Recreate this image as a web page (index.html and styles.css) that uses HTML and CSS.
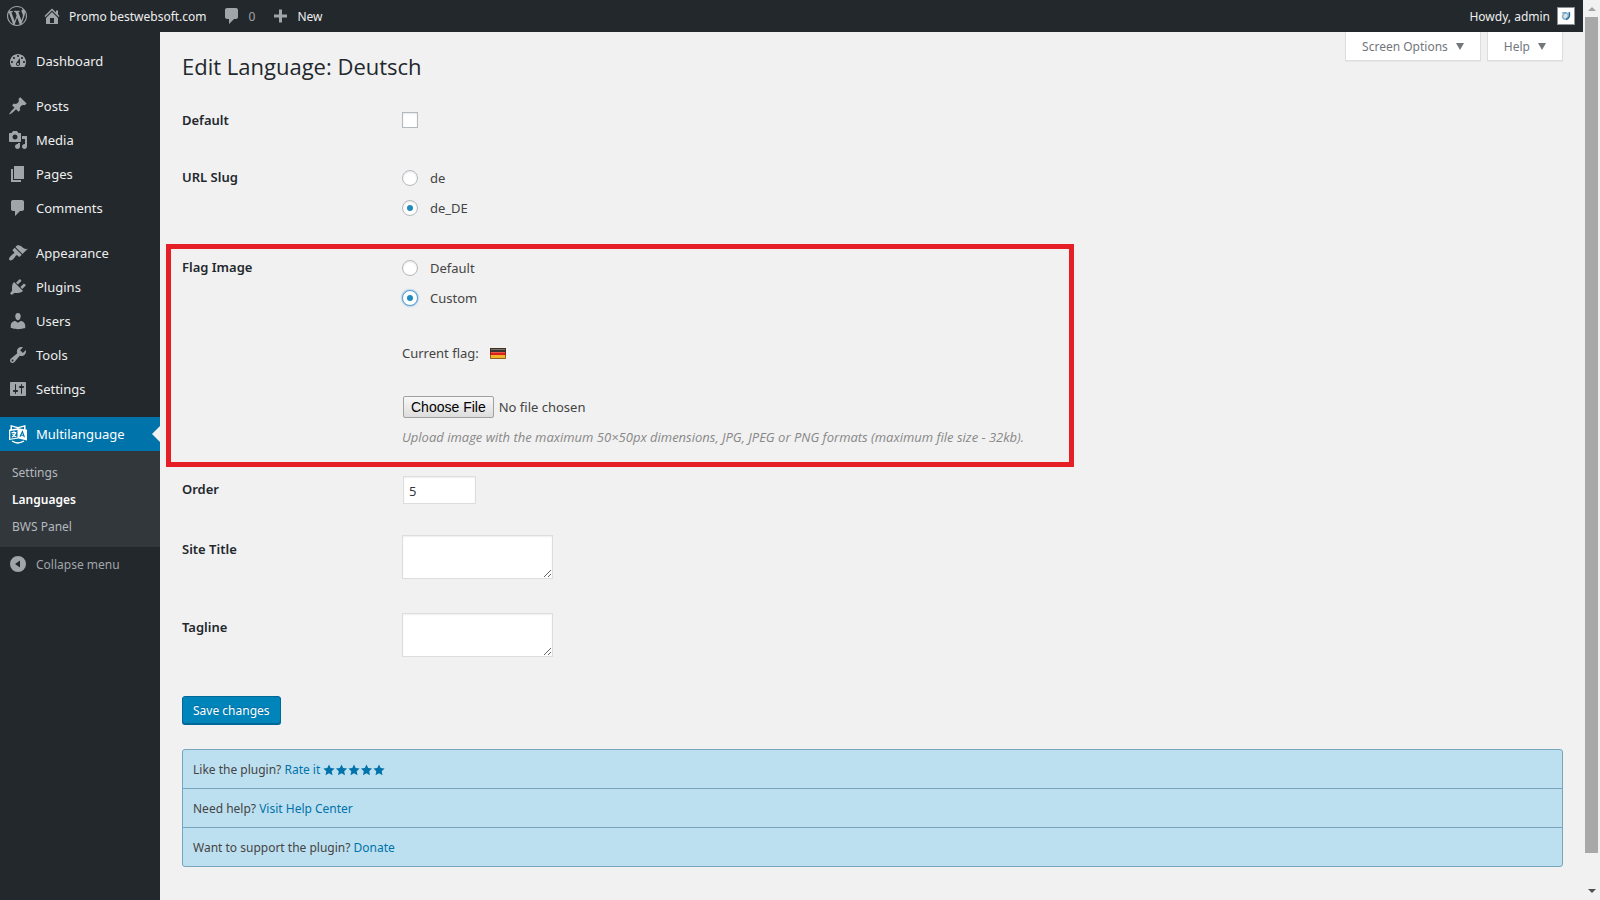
FILE: index.html
```
<!DOCTYPE html>
<html lang="en">
<head>
    <meta charset="UTF-8">
    <meta name="viewport" content="width=device-width, initial-scale=1.0">
    <title>Edit Language: Deutsch</title>
    <link rel="stylesheet" href="styles.css">
</head>
<body>
    <div class="page">
        <header class="adminbar">
            <a href="#" class="bar-item" aria-label="About WordPress">
                <svg class="icon" viewBox="0 0 20 20"><path d="M20 10c0-5.51-4.49-10-10-10C4.48 0 0 4.49 0 10c0 5.52 4.48 10 10 10 5.51 0 10-4.48 10-10zM7.78 15.37L4.37 6.22c.55-.02 1.17-.08 1.17-.08.5-.06.44-1.13-.06-1.11 0 0-1.45.11-2.37.11-.18 0-.37 0-.58-.01C4.12 2.69 6.87 1.11 10 1.11c2.33 0 4.45.87 6.05 2.34-.68-.11-1.65.39-1.65 1.58 0 .74.45 1.36.9 2.1.35.61.55 1.36.55 2.46 0 1.49-1.4 5-1.4 5l-3.03-8.37c.54-.02.82-.17.82-.17.5-.05.44-1.25-.06-1.22 0 0-1.44.12-2.38.12-.87 0-2.33-.12-2.33-.12-.5-.03-.56 1.2-.06 1.22l.92.08 1.26 3.41zM17.41 10c.24-.64.74-1.87.43-4.25.7 1.29 1.05 2.71 1.05 4.25 0 3.29-1.73 6.24-4.4 7.78.97-2.59 1.94-5.2 2.92-7.78zM6.1 18.09C3.12 16.65 1.11 13.53 1.11 10c0-1.3.23-2.48.72-3.59C3.25 10.3 4.67 14.2 6.1 18.09zm4.03-6.63l2.58 6.98c-.86.29-1.76.45-2.71.45-.79 0-1.57-.11-2.29-.33.81-2.38 1.62-4.74 2.42-7.1z"/></svg>
            </a>
            <a href="#" class="bar-item">
                <svg class="icon" viewBox="0 0 20 20"><path d="M16 8.5l1.53 1.53-1.06 1.06L10 4.6l-6.47 6.49-1.06-1.06L10 2.5l4 4v-2h2v4zm-6-2.46l6 5.99V18H4v-5.97zM12 17v-5H8v5h4z"/></svg>
                <span>Promo bestwebsoft.com</span>
            </a>
            <a href="#" class="bar-item bar-comments">
                <svg class="icon" viewBox="0 0 20 20"><path d="M5 2h9c1.1 0 2 .9 2 2v7c0 1.1-.9 2-2 2h-2l-5 5v-5H5c-1.1 0-2-.9-2-2V4c0-1.1.9-2 2-2z"/></svg>
                <span>0</span>
            </a>
            <a href="#" class="bar-item">
                <svg class="icon" viewBox="0 0 20 20"><path d="M17 8.5v3h-5v5H9v-5H4v-3h5v-5h3v5z"/></svg>
                <span>New</span>
            </a>
            <a href="#" class="bar-item bar-account">
                <span>Howdy, admin</span>
                <svg class="avatar" viewBox="0 0 18 18"><rect width="18" height="18" fill="#8c8f94"/><rect x="1" y="1" width="16" height="16" fill="#fff"/><ellipse cx="8.5" cy="9" rx="2.6" ry="3.2" fill="#d5e5ee" stroke="#8db4cc" stroke-width="1.6" transform="rotate(30 8.5 9)"/><path d="M12 5c1.5 3 .5 6.5-3 7.5" fill="none" stroke="#2f6d96" stroke-width="1.4"/><path d="M5 6l4-.5" stroke="#5d93b5"/></svg>
            </a>
        </header>

        <div class="layout">
            <nav class="menu">
                <a href="#" class="menu-item"><svg class="icon" viewBox="0 0 20 20"><path d="M3.76 16h12.48c1.1-1.37 1.76-3.11 1.76-5 0-4.42-3.58-8-8-8s-8 3.58-8 8c0 1.89.66 3.63 1.76 5zM10 4c.55 0 1 .45 1 1s-.45 1-1 1-1-.45-1-1 .45-1 1-1zM6 6c.55 0 1 .45 1 1s-.45 1-1 1-1-.45-1-1 .45-1 1-1zm8 0c.55 0 1 .45 1 1s-.45 1-1 1-1-.45-1-1 .45-1 1-1zm-5.37 5.55L12 7v6c0 1.1-.9 2-2 2s-2-.9-2-2c0-.57.24-1.08.63-1.45zM4 10c.55 0 1 .45 1 1s-.45 1-1 1-1-.45-1-1 .45-1 1-1zm12 0c.55 0 1 .45 1 1s-.45 1-1 1-1-.45-1-1 .45-1 1-1zm-5 3c0-.55-.45-1-1-1s-1 .45-1 1 .45 1 1 1 1-.45 1-1z"/></svg>Dashboard</a>
                <div class="separator"></div>
                <a href="#" class="menu-item"><svg class="icon" viewBox="0 0 20 20"><path d="M10.44 3.02l1.82-1.82 6.36 6.35-1.83 1.82c-1.05-.68-2.48-.57-3.41.36l-.75.75c-.92.93-1.04 2.35-.35 3.41l-1.83 1.82-2.41-2.41-2.8 2.79c-.42.42-3.38 2.71-3.8 2.29s1.86-3.39 2.28-3.81l2.79-2.79L4.1 9.36l1.83-1.82c1.05.69 2.48.57 3.4-.36l.75-.75c.93-.92 1.05-2.35.36-3.41z"/></svg>Posts</a>
                <a href="#" class="menu-item"><svg class="icon" viewBox="0 0 20 20"><path d="M13 11V4c0-.55-.45-1-1-1h-1.67L9 1H5L3.67 3H2c-.55 0-1 .45-1 1v7c0 .55.45 1 1 1h10c.55 0 1-.45 1-1zM7 4.5c1.38 0 2.5 1.12 2.5 2.5S8.38 9.5 7 9.5 4.5 8.38 4.5 7 5.62 4.5 7 4.5zM14 6h5v10.5c0 1.38-1.12 2.5-2.5 2.5S14 17.88 14 16.5s1.12-2.5 2.5-2.5c.17 0 .34.02.5.05V9h-3V6zm-4 8.05V13h2v3.5c0 1.38-1.12 2.5-2.5 2.5S7 17.88 7 16.5 8.12 14 9.5 14c.17 0 .34.02.5.05z"/></svg>Media</a>
                <a href="#" class="menu-item"><svg class="icon" viewBox="0 0 20 20"><path d="M6 15V2h10v13H6zm-1 1h8v2H3V5h2v11z"/></svg>Pages</a>
                <a href="#" class="menu-item"><svg class="icon" viewBox="0 0 20 20"><path d="M5 2h9c1.1 0 2 .9 2 2v7c0 1.1-.9 2-2 2h-2l-5 5v-5H5c-1.1 0-2-.9-2-2V4c0-1.1.9-2 2-2z"/></svg>Comments</a>
                <div class="separator"></div>
                <a href="#" class="menu-item"><svg class="icon" viewBox="0 0 20 20"><path d="M14.48 11.06L7.41 3.99l1.5-1.5c.5-.56 2.3-.47 3.51.32 1.21.8 1.43 1.28 2.91 2.1 1.18.64 2.45 1.26 4.45.85zm-.71.71L6.7 4.7 4.93 6.47c-.39.39-.39 1.02 0 1.41l1.06 1.06c.39.39.39 1.03 0 1.42-.6.6-1.43 1.11-2.21 1.69-.35.26-.7.53-1.01.84C1.43 14.23.4 16.08 1.4 17.07c.99 1 2.84-.03 4.18-1.36.31-.31.58-.66.85-1.02.57-.78 1.08-1.61 1.69-2.21.39-.39 1.02-.39 1.41 0l1.06 1.06c.39.39 1.02.39 1.41 0z"/></svg>Appearance</a>
                <a href="#" class="menu-item"><svg class="icon" viewBox="0 0 20 20"><path d="M13.11 4.36L9.87 7.6 8 5.73l3.24-3.24c.35-.34 1.05-.2 1.56.32.52.51.66 1.21.31 1.55zm-8 1.77l.91-1.12 9.01 9.01-1.19.84c-.71.71-2.63 1.16-3.82 1.16H6.14L4.9 17.26c-.59.59-1.54.59-2.12 0-.59-.58-.59-1.53 0-2.12l1.24-1.24v-3.88c0-1.13.4-3.19 1.09-3.89zm7.26 3.97l3.24-3.24c.34-.35 1.04-.21 1.55.31.52.51.66 1.21.31 1.55l-3.24 3.25z"/></svg>Plugins</a>
                <a href="#" class="menu-item"><svg class="icon" viewBox="0 0 20 20"><path d="M10 9.25c-2.27 0-2.73-3.44-2.73-3.44C7 4.02 7.82 2 9.97 2c2.16 0 2.98 2.02 2.71 3.81 0 0-.41 3.44-2.68 3.44zm0 2.57L12.72 10c2.39 0 4.52 2.33 4.52 4.53v2.49s-3.65 1.13-7.24 1.13c-3.65 0-7.24-1.13-7.24-1.13v-2.49c0-2.25 1.94-4.48 4.47-4.48z"/></svg>Users</a>
                <a href="#" class="menu-item"><svg class="icon" viewBox="0 0 20 20"><path d="M16.68 9.77c-1.34 1.34-3.3 1.67-4.95.99l-5.41 6.52c-.99.99-2.59.99-3.58 0s-.99-2.59 0-3.57l6.52-5.42c-.68-1.65-.35-3.61.99-4.95 1.28-1.28 3.12-1.62 4.72-1.06l-2.89 2.89 2.82 2.82 2.86-2.87c.53 1.58.18 3.39-1.08 4.65zM3.81 16.21c.4.39 1.04.39 1.43 0 .4-.4.4-1.04 0-1.43-.39-.4-1.03-.4-1.43 0-.39.39-.39 1.03 0 1.43z"/></svg>Tools</a>
                <a href="#" class="menu-item"><svg class="icon" viewBox="0 0 20 20"><path d="M18 16V4c0-.55-.45-1-1-1H3c-.55 0-1 .45-1 1v12c0 .55.45 1 1 1h14c.55 0 1-.45 1-1zM8 11h1c.55 0 1 .45 1 1s-.45 1-1 1H8v1.5c0 .28-.22.5-.5.5s-.5-.22-.5-.5V13H6c-.55 0-1-.45-1-1s.45-1 1-1h1V5.5c0-.28.22-.5.5-.5s.5.22.5.5V11zm5-2h-1c-.55 0-1-.45-1-1s.45-1 1-1h1V5.5c0-.28.22-.5.5-.5s.5.22.5.5V7h1c.55 0 1 .45 1 1s-.45 1-1 1h-1v5.5c0 .28-.22.5-.5.5s-.5-.22-.5-.5V9z"/></svg>Settings</a>
                <div class="separator"></div>
                <a href="#" class="menu-item current"><svg class="icon" viewBox="0 0 20 20"><path d="M2.5 1L10 3l7.500-2v4l1.500 1v10.500l-8.500-2-9.500 1.500V6l1.500-1z"/><path d="M4 2.800l5.500 1.500L4 5.300zM16 2.800l-5.500 1.500 5.500 1zM2.300 7l7.200-1v7.500l-7.200 1.200z" fill="#0073aa"/><path d="M3.500 8.700h4.800M6 7.200v1.500M7.500 9c-.5 2-1.700 3.400-3.700 4.200M4.600 10c.6 1.400 1.800 2.300 3.700 2.800" fill="none" stroke="#fff" stroke-width="1.2"/><path d="M12 12.800l2.400-5.300 2 5.800M12.800 11.200h3" fill="none" stroke="#0073aa" stroke-width="1.1"/><path d="M4 17c3.500 2.400 8 2.400 12 0" fill="none" stroke="#fff" stroke-width="1.4"/></svg>Multilanguage</a>
                <div class="submenu">
                    <a href="#">Settings</a>
                    <a href="#" class="active">Languages</a>
                    <a href="#">BWS Panel</a>
                </div>
                <button type="button" class="menu-item collapse"><svg class="icon" viewBox="0 0 20 20"><path fill-rule="evenodd" d="M10 2a8 8 0 1 1 0 16 8 8 0 0 1 0-16zm2 4.5L7 10l5 3.5z"/></svg>Collapse menu</button>
            </nav>

            <main class="content">
                <div class="heading">
                    <h1>Edit Language: Deutsch</h1>
                    <div class="screen-links">
                        <button type="button">Screen Options <span class="arrow"></span></button>
                        <button type="button">Help <span class="arrow"></span></button>
                    </div>
                </div>

                <form>
                    <div class="row">
                        <label class="title" for="isDefault">Default</label>
                        <div class="field">
                            <div class="check-line"><input type="checkbox" id="isDefault"></div>
                        </div>
                    </div>
                    <div class="row">
                        <div class="title">URL Slug</div>
                        <div class="field">
                            <label class="option"><input type="radio" name="slug">de</label>
                            <label class="option"><input type="radio" name="slug" checked>de_DE</label>
                        </div>
                    </div>
                    <div class="row highlighted">
                        <div class="title">Flag Image</div>
                        <div class="field">
                            <label class="option"><input type="radio" name="flag">Default</label>
                            <label class="option"><input type="radio" name="flag" class="focused" checked>Custom</label>
                            <div class="current-flag">
                                Current flag:
                                <svg class="flag" viewBox="0 0 16 11"><rect width="16" height="4" fill="#3a3532"/><rect y="4" width="16" height="3" fill="#d8201c"/><rect y="7" width="16" height="4" fill="#f4b32c"/><path d="M1 1h14v1H1z" fill="#77716e"/><path d="M1 4h14v1H1z" fill="#ee5548"/><path d="M.5.5h15v10H.5z" fill="none" stroke="#4a2c10" stroke-opacity=".6"/></svg>
                            </div>
                            <input type="file" aria-label="Flag image file">
                            <p class="description">Upload image with the maximum 50×50px dimensions, JPG, JPEG or PNG formats (maximum file size - 32kb).</p>
                        </div>
                    </div>
                    <div class="row">
                        <label class="title" for="order">Order</label>
                        <div class="field"><input type="text" id="order" class="order" value="5"></div>
                    </div>
                    <div class="row">
                        <label class="title" for="siteTitle">Site Title</label>
                        <div class="field"><textarea id="siteTitle"></textarea></div>
                    </div>
                    <div class="row">
                        <label class="title" for="tagline">Tagline</label>
                        <div class="field"><textarea id="tagline"></textarea></div>
                    </div>
                    <button type="submit" class="save">Save changes</button>
                </form>

                <div class="support">
                    <div>Like the plugin? <a href="#">Rate it <svg class="stars" viewBox="0 0 62 12"><path id="star" d="M6 .5l1.700 3.600 3.900.4-2.900 2.700.8 4L6 9.200l-3.500 2 .8-4L.4 4.500l3.900-.4z"/><use href="#star" x="12.5"/><use href="#star" x="25"/><use href="#star" x="37.5"/><use href="#star" x="50"/></svg></a></div>
                    <div>Need help? <a href="#">Visit Help Center</a></div>
                    <div>Want to support the plugin? <a href="#">Donate</a></div>
                </div>
            </main>
        </div>
    </div>

    <div class="scrollbar">
        <span class="scroll-up"></span>
        <span class="scroll-thumb"></span>
        <span class="scroll-down"></span>
    </div>
</body>
</html>
```

FILE: styles.css
```
* {
    box-sizing: border-box;
}
body {
    margin: 0;
    display: flex;
    min-height: 100vh;
    background-color: #f1f1f1;
    color: #444;
    font-family: "Noto Sans", "Open Sans", sans-serif;
    font-size: 13px;
    line-height: 18px;
}
a {
    color: #0073aa;
    text-decoration: none;
}
button {
    font-family: inherit;
    cursor: pointer;
}
.page {
    flex: 1;
    display: flex;
    flex-direction: column;
}
.icon {
    width: 20px;
    height: 20px;
    fill: #a0a5aa;
    flex-shrink: 0;
}

/* Top bar */
.adminbar {
    display: flex;
    align-items: center;
    height: 32px;
    padding: 0 8px 0 7px;
    gap: 15px;
    background-color: #23282d;
    font-size: 12px;
}
.bar-item {
    display: flex;
    align-items: center;
    gap: 7px;
    color: #eee;
}
.bar-item span {
    padding-top: 1px;
}
.bar-comments {
    color: #a0a5aa;
}
.bar-account {
    margin-left: auto;
}
.avatar {
    width: 18px;
    height: 18px;
}

/* Side menu */
.layout {
    flex: 1;
    display: flex;
}
.menu {
    width: 160px;
    padding-top: 12px;
    background-color: #23282d;
}
.menu-item {
    display: flex;
    align-items: center;
    gap: 8px;
    height: 34px;
    padding: 0 8px;
    color: #eee;
}
.separator {
    height: 11px;
}
.current {
    position: relative;
    background-color: #0073aa;
    color: #fff;
}
.current .icon {
    fill: #fff;
}
.current::after {
    content: "";
    position: absolute;
    right: 0;
    top: 9px;
    border: 8px solid transparent;
    border-left-width: 0;
    border-right-color: #f1f1f1;
}
.submenu {
    padding: 8px 0 7px;
    background-color: #32373c;
    font-size: 12px;
}
.submenu a {
    display: block;
    padding: 0 12px;
    line-height: 27px;
    color: #b4b9be;
}
.submenu .active {
    color: #fff;
    font-weight: 600;
}
.collapse {
    width: 100%;
    border: none;
    background: none;
    color: #a0a5aa;
    font-size: 12px;
}

/* Main area */
.content {
    flex: 1;
    padding: 0 20px 30px 22px;
}
.heading {
    display: flex;
    justify-content: space-between;
    align-items: flex-start;
    height: 59px;
}
h1 {
    margin: 0;
    padding-top: 19px;
    color: #23282d;
    font-family: "Open Sans", sans-serif;
    font-size: 22px;
    font-weight: 400;
    line-height: 30px;
}
.screen-links {
    display: flex;
    gap: 6px;
}
.screen-links button {
    display: flex;
    align-items: center;
    gap: 8px;
    height: 29px;
    padding: 0 16px;
    border: 1px solid #ddd;
    border-top: none;
    background-color: #fff;
    box-shadow: 0 1px 1px rgba(0, 0, 0, 0.04);
    color: #72777c;
    font-size: 12px;
}
.arrow {
    border: 4px solid transparent;
    border-top: 7px solid #72777c;
    border-bottom: none;
}

/* Form */
.row {
    display: grid;
    grid-template-columns: 220px 1fr;
}
.title {
    padding-top: 20px;
    color: #23282d;
    font-weight: 600;
}
.field {
    padding: 15px 0;
}
.check-line {
    display: flex;
    align-items: center;
    height: 27px;
}
.option {
    display: flex;
    align-items: center;
    gap: 12px;
    height: 30px;
}
input[type="checkbox"],
input[type="radio"] {
    appearance: none;
    display: grid;
    place-items: center;
    width: 16px;
    height: 16px;
    margin: 0;
    border: 1px solid #b4b9be;
    background-color: #fff;
    box-shadow: inset 0 1px 2px rgba(0, 0, 0, 0.1);
}
input[type="radio"] {
    border-radius: 50%;
}
input[type="radio"]:checked::before {
    content: "";
    width: 6px;
    height: 6px;
    border-radius: 50%;
    background-color: #1e8cbe;
}
input.focused {
    border-color: #5b9dd9;
    box-shadow: 0 0 2px rgba(30, 140, 190, 0.8);
}
.highlighted {
    position: relative;
}
.highlighted::after {
    content: "";
    position: absolute;
    left: -16px;
    top: 6px;
    bottom: -7px;
    width: 898px;
    border: 5px solid #e61f26;
    pointer-events: none;
}
.current-flag {
    display: flex;
    align-items: center;
    gap: 11px;
    height: 22px;
    margin: 29px 0 32px;
}
.flag {
    width: 16px;
    height: 11px;
}
input[type="file"] {
    display: block;
    height: 22px;
    margin: 1px;
    color: #444;
    font-family: inherit;
    font-size: 13px;
    line-height: 20px;
}
input[type="file"]::file-selector-button {
    box-sizing: border-box;
    height: 22px;
    margin: 0 5px 0 0;
    padding: 0 7px;
    border: 1px solid #a0a0a0;
    border-radius: 2px;
    background: linear-gradient(#f8f8f8, #dddddd);
    color: #000;
    font-family: "Liberation Sans", Arial, sans-serif;
    font-size: 14px;
}
.description {
    margin: 10px 0 -1px;
    color: #888;
    font-family: "Open Sans", sans-serif;
    font-style: italic;
}
.order,
textarea {
    display: block;
    border: 1px solid #ddd;
    background-color: #fff;
    box-shadow: inset 0 1px 2px rgba(0, 0, 0, 0.07);
    color: #32373c;
    font-family: inherit;
    font-size: 13px;
}
.order {
    width: 73px;
    height: 28px;
    margin: 1px;
    padding: 2px 5px 0;
}
textarea {
    width: 151px;
    height: 44px;
    margin-bottom: 4px;
    padding: 2px 6px;
}
.save {
    display: block;
    height: 28px;
    margin: 20px 0 25px;
    padding: 0 10px;
    border: 1px solid #006799;
    border-radius: 3px;
    background-color: #0085ba;
    box-shadow: 0 1px 0 #006799;
    color: #fff;
    font-size: 12px;
    text-shadow: 0 -1px 1px #006799;
}

/* Plugin links */
.support {
    border: 1px solid #78a5be;
    border-radius: 3px;
    background-color: #bde0f0;
    font-size: 12px;
}
.support div {
    padding: 11px 10px 9px;
}
.support div + div {
    border-top: 1px solid #78a5be;
}
.stars {
    width: 62px;
    height: 12px;
    vertical-align: -2px;
    fill: #0073aa;
}

/* Scrollbar column */
.scrollbar {
    display: flex;
    flex-direction: column;
    align-items: center;
    width: 17px;
    padding: 7px 0;
}
.scroll-up,
.scroll-down {
    border: 4px solid transparent;
}
.scroll-up {
    border-top: none;
    border-bottom-color: #a3a3a3;
}
.scroll-thumb {
    flex: 1;
    width: 13px;
    margin: 6px 0 36px;
    background-color: #a8a8a8;
}
.scroll-down {
    border-bottom: none;
    border-top-color: #505050;
}
```
